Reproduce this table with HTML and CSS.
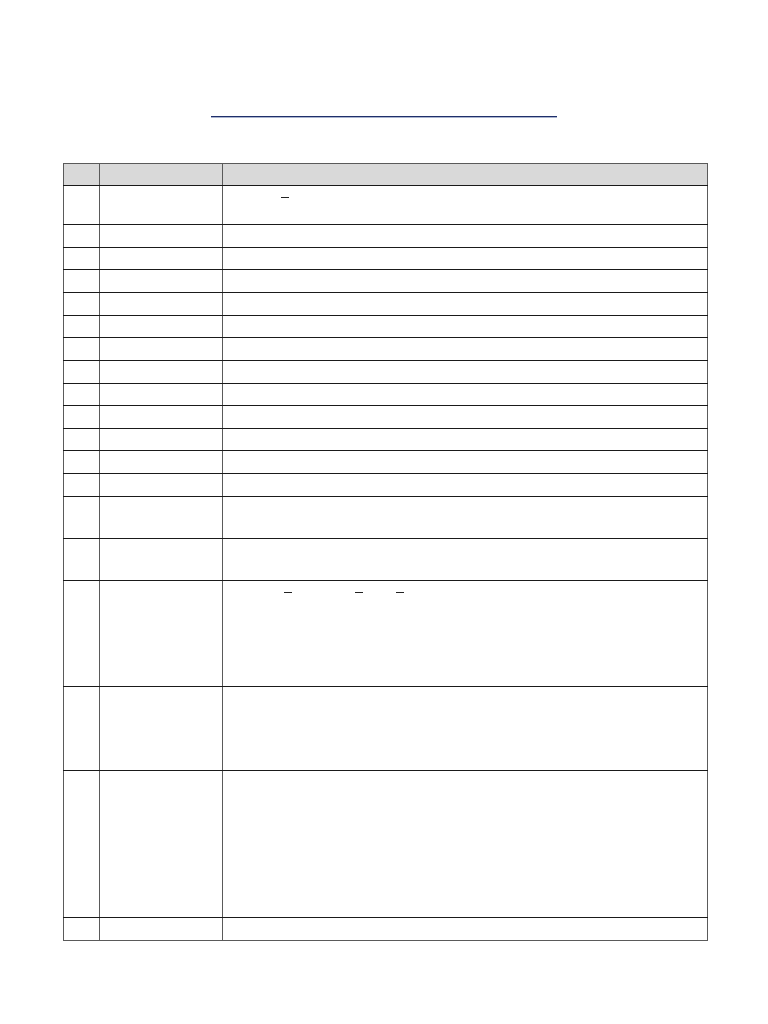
FILE: index.html
```html
<!DOCTYPE html>
<html>
<head>
<meta charset="utf-8">
<link rel="stylesheet" href="styles.css">
</head>
<body>
<div class="page">
  <div class="title-rule"></div>
  <table class="grid">
    <colgroup><col class="c1"><col class="c2"><col class="c3"></colgroup>
    <tr class="head h22"><td></td><td></td><td></td></tr>
    <tr class="h39"><td></td><td></td><td class="marks"><span class="bar b59"></span></td></tr>
    <tr class="h23"><td></td><td></td><td></td></tr>
    <tr class="h22"><td></td><td></td><td></td></tr>
    <tr class="h23"><td></td><td></td><td></td></tr>
    <tr class="h23"><td></td><td></td><td></td></tr>
    <tr class="h22"><td></td><td></td><td></td></tr>
    <tr class="h23"><td></td><td></td><td></td></tr>
    <tr class="h23"><td></td><td></td><td></td></tr>
    <tr class="h22"><td></td><td></td><td></td></tr>
    <tr class="h23"><td></td><td></td><td></td></tr>
    <tr class="h22"><td></td><td></td><td></td></tr>
    <tr class="h23"><td></td><td></td><td></td></tr>
    <tr class="h23"><td></td><td></td><td></td></tr>
    <tr class="h42"><td></td><td></td><td></td></tr>
    <tr class="h42"><td></td><td></td><td></td></tr>
    <tr class="h106"><td></td><td></td><td class="marks"><span class="bar b62"></span><span class="bar b64"></span><span class="bar b34"></span></td></tr>
    <tr class="h84"><td></td><td></td><td></td></tr>
    <tr class="h147"><td></td><td></td><td></td></tr>
    <tr class="h23"><td></td><td></td><td></td></tr>
  </table>
</div>
</body>
</html>
```
FILE: styles.css
```css
html, body {
  margin: 0;
  padding: 0;
  background: #ffffff;
  font-family: "Liberation Sans", Arial, sans-serif;
}
.page {
  padding-top: 116px;
  padding-left: 63px;
}
.title-rule {
  width: 346px;
  margin-left: 148px;
  height: 0;
  border-bottom: 1px solid #1f2f6a;
  box-shadow: 0 1px 0 #aab4cf;
}
.grid {
  margin-top: 46px;
  border-collapse: collapse;
  table-layout: fixed;
  width: 644px;
}
.c1 { width: 36px; }
.c2 { width: 123px; }
.c3 { width: 485px; }
.grid td {
  padding: 0;
  border-left: 1px solid #5a5a5a;
  border-right: 1px solid #5a5a5a;
  border-top: 1px solid #1a1a1a;
  border-bottom: 1px solid #1a1a1a;
  vertical-align: top;
}
.grid tr:first-child td { border-top-color: #5a5a5a; }
.grid tr:last-child td { border-bottom-color: #5a5a5a; }
.head td { background: #d9d9d9; }
.h22 td { height: 21px; }
.h23 td { height: 22px; }
.h39 td { height: 38px; }
.h42 td { height: 41px; }
.h84 td { height: 83px; }
.h106 td { height: 105px; }
.h147 td { height: 146px; }
.grid td.marks {
  padding-top: 7px;
  line-height: 0;
}
.h39 td.marks { height: 31px; }
.h106 td.marks { height: 98px; }
.bar {
  display: inline-block;
  width: 8px;
  height: 1px;
  background: #222;
}
.b59 { margin-left: 58px; }
.b62 { margin-left: 61px; }
.b64 { margin-left: 63px; }
.b34 { margin-left: 33px; }
```
